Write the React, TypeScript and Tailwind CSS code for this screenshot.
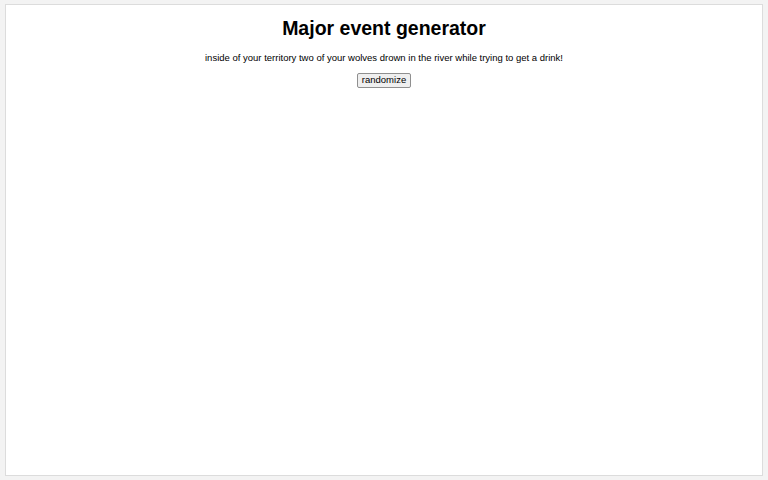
export default function App() {
  return (
    <div className="h-[480px] w-[768px] bg-[#f3f3f3] px-[5px] pt-[4px] pb-[4px]" style={{ fontFamily: '"Liberation Sans", Arial, sans-serif' }}>
      <div className="flex h-full flex-col items-center border border-[#dcdcdc] bg-white text-black">
        <h1 className="mt-[12px] text-[19.5px] font-bold leading-[22px]">Major event generator</h1>
        <p className="mt-[13px] text-[9.5px] leading-[11px]">
          inside of your territory two of your wolves drown in the river while trying to get a drink!
        </p>
        <button className="mt-[10px] rounded-[2px] border border-[#8f8f8f] bg-[#efefef] px-[4px] pb-[1px] text-[9.5px] leading-[12px]">
          randomize
        </button>
      </div>
    </div>
  );
}
